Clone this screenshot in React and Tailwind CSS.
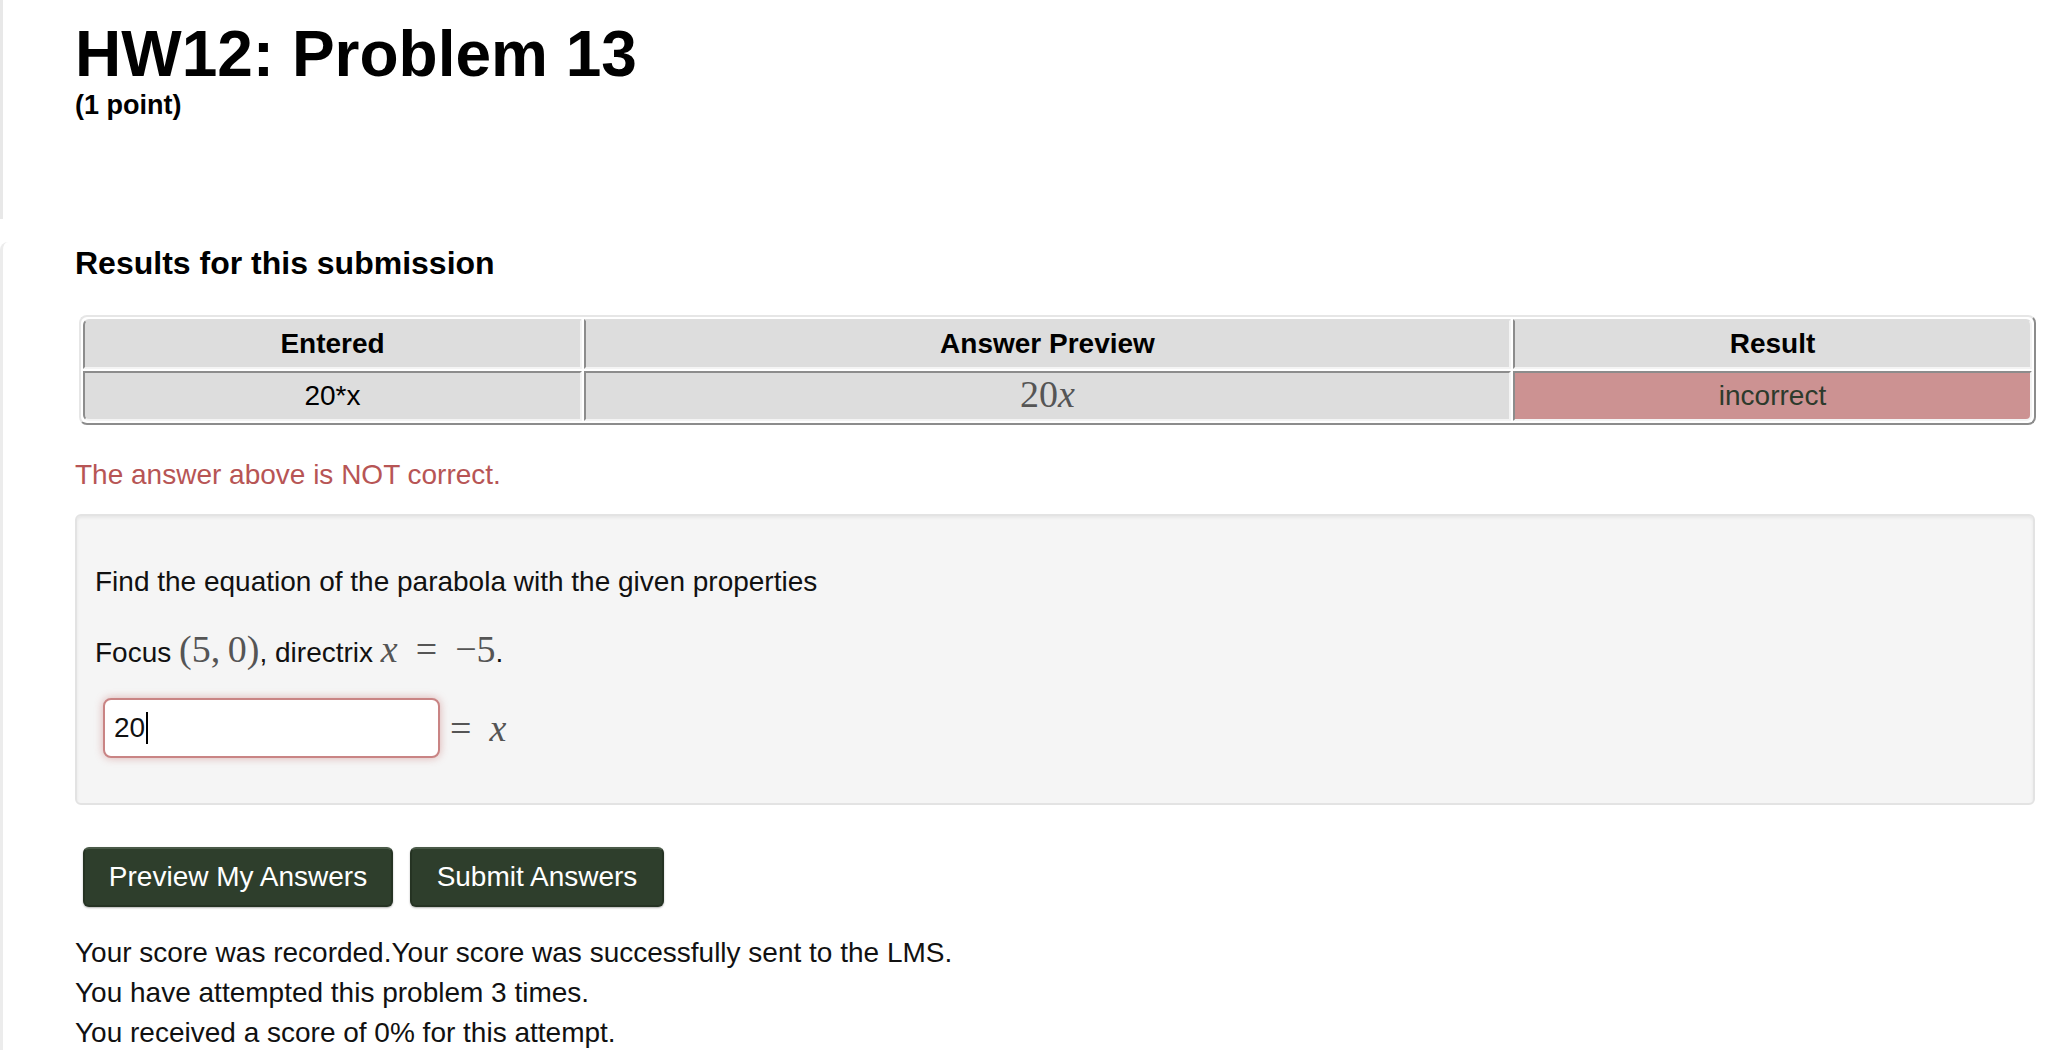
export default function App() {
  const math = "font-['Liberation_Serif',serif] text-[#555]"
  const head =
    'h-[50px] border-2 border-b-[#f4f4f4] border-l-[#8c8c8c] border-r-[#f4f4f4] border-t-[#dddddd] bg-[#dddddd] font-bold text-black'
  const cell =
    'h-[50px] border-2 border-b-[#f4f4f4] border-l-[#8c8c8c] border-r-[#f4f4f4] border-t-[#8c8c8c] text-center'
  return (
    <div className="min-h-screen bg-white font-['Liberation_Sans',Arial,sans-serif] text-[#111]">
      <div className="h-[219px] border-l-[3px] border-[#e8e8e8] pl-[72px] pt-[19px]">
        <h1 className="text-[64px] font-bold leading-[70px] text-black">HW12: Problem 13</h1>
        <div className="text-[27px] font-bold leading-[32px] text-black">(1 point)</div>
      </div>

      <div className="mt-[23px] rounded-tl-lg border-l-[3px] border-[#ececec] pb-10 pl-[72px] pr-[30px] pt-[2px]">
        <h2 className="text-[32px] font-bold leading-[38px] text-black">Results for this submission</h2>

        <table className="ml-[4px] mt-[33px] w-[1957px] border-separate border-spacing-[2px] rounded-lg border-2 border-b-[#8c8c8c] border-l-[#e6e6e6] border-r-[#8c8c8c] border-t-[#e6e6e6] text-[28px]">
          <thead>
            <tr>
              <th className={`${head} w-[499px] rounded-tl-md`}>Entered</th>
              <th className={`${head} w-[927px]`}>Answer Preview</th>
              <th className={`${head} rounded-tr-md`}>Result</th>
            </tr>
          </thead>
          <tbody>
            <tr>
              <td className={`${cell} rounded-bl-md bg-[#dddddd] text-black`}>20*x</td>
              <td className={`${cell} bg-[#dddddd]`}>
                <span className={`${math} text-[38px] leading-[40px] text-[#333]`}>
                  20<i>x</i>
                </span>
              </td>
              <td className={`${cell} rounded-br-md bg-[#cc9292] text-[#2c3a2c]`}>incorrect</td>
            </tr>
          </tbody>
        </table>

        <p className="mt-[30px] text-[28px] leading-[40px] text-[#b75555]">The answer above is NOT correct.</p>

        <div className="mt-[19px] h-[291px] w-[1960px] rounded-md border-2 border-[#e3e3e3] bg-[#f5f5f5] px-[18px] pt-[46px] shadow-[inset_0_2px_3px_rgba(0,0,0,0.06)]">
          <p className="text-[28px] leading-[40px]">Find the equation of the parabola with the given properties</p>
          <p className="mt-[27px] text-[28px] leading-[40px]">
            Focus <span className={`${math} text-[38px]`}>(5,&thinsp;0)</span>, directrix{' '}
            <span className={`${math} text-[38px]`}>
              <i>x</i>
              <span className="mx-[18px]">=</span>−5
            </span>
            .
          </p>
          <div className="ml-[8px] mt-[25px] flex items-center">
            <div className="flex h-[60px] w-[337px] items-center rounded-lg border-2 border-[#c98484] bg-white pl-[9px] text-[28px] shadow-[0_0_8px_rgba(185,74,72,0.4)]">
              20
              <span className="ml-[1px] h-[32px] w-[2px] bg-black" />
            </div>
            <span className={`${math} ml-[10px] text-[38px]`}>
              <span className="mr-[18px]">=</span>
              <i>x</i>
            </span>
          </div>
        </div>

        <div className="ml-[8px] mt-[42px] flex gap-[17px]">
          <button className="h-[60px] w-[310px] rounded-md border-2 border-[#253323] border-t-[#4a5a48] bg-[#2e3e2c] text-[28px] text-white shadow-[0_1px_2px_rgba(0,0,0,0.3)]">
            Preview My Answers
          </button>
          <button className="h-[60px] w-[254px] rounded-md border-2 border-[#253323] border-t-[#4a5a48] bg-[#2e3e2c] text-[28px] text-white shadow-[0_1px_2px_rgba(0,0,0,0.3)]">
            Submit Answers
          </button>
        </div>

        <div className="mt-[26px] text-[28px] leading-[40px] text-[#111]">
          <p>Your score was recorded.Your score was successfully sent to the LMS.</p>
          <p>You have attempted this problem 3 times.</p>
          <p>You received a score of 0% for this attempt.</p>
        </div>
      </div>
    </div>
  )
}
